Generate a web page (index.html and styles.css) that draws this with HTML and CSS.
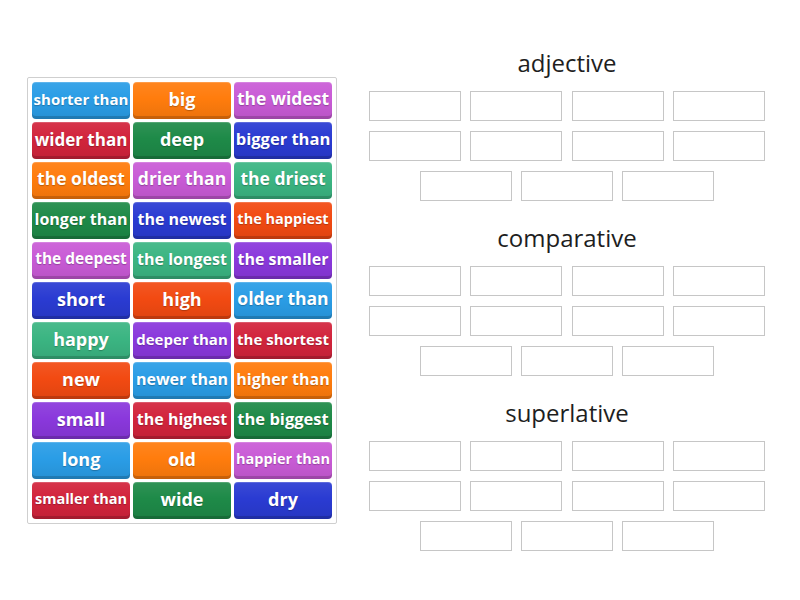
FILE: index.html
```html
<!DOCTYPE html>
<html lang="en">
<head>
<meta charset="utf-8">
<title>Group sort</title>
<link rel="stylesheet" href="styles.css">
</head>
<body>
<main class="page">
  <section class="bank">
    <div class="tile blue fs15">shorter than</div>
    <div class="tile orange fs18">big</div>
    <div class="tile pink fs175">the widest</div>

    <div class="tile red fs17">wider than</div>
    <div class="tile green fs18">deep</div>
    <div class="tile navy fs165">bigger than</div>

    <div class="tile orange fs175">the oldest</div>
    <div class="tile pink fs175">drier than</div>
    <div class="tile teal fs175">the driest</div>

    <div class="tile green fs16">longer than</div>
    <div class="tile navy fs16">the newest</div>
    <div class="tile vermilion fs145">the happiest</div>

    <div class="tile pink fs155">the deepest</div>
    <div class="tile teal fs16">the longest</div>
    <div class="tile purple fs16">the smaller</div>

    <div class="tile navy fs18">short</div>
    <div class="tile vermilion fs18">high</div>
    <div class="tile blue fs175">older than</div>

    <div class="tile teal fs18">happy</div>
    <div class="tile purple fs15">deeper than</div>
    <div class="tile red fs15">the shortest</div>

    <div class="tile vermilion fs18">new</div>
    <div class="tile blue fs16">newer than</div>
    <div class="tile orange fs16">higher than</div>

    <div class="tile purple fs18">small</div>
    <div class="tile red fs16">the highest</div>
    <div class="tile green fs165">the biggest</div>

    <div class="tile blue fs18">long</div>
    <div class="tile orange fs18">old</div>
    <div class="tile pink fs145">happier than</div>

    <div class="tile red fs145">smaller than</div>
    <div class="tile green fs18">wide</div>
    <div class="tile navy fs18">dry</div>
  </section>

  <section class="groups">
    <div class="group">
      <h2 class="group-title">adjective</h2>
      <div class="slots">
        <div class="slot"></div><div class="slot"></div><div class="slot"></div><div class="slot"></div>
        <div class="slot"></div><div class="slot"></div><div class="slot"></div><div class="slot"></div>
        <div class="slot"></div><div class="slot"></div><div class="slot"></div>
      </div>
    </div>
    <div class="group">
      <h2 class="group-title">comparative</h2>
      <div class="slots">
        <div class="slot"></div><div class="slot"></div><div class="slot"></div><div class="slot"></div>
        <div class="slot"></div><div class="slot"></div><div class="slot"></div><div class="slot"></div>
        <div class="slot"></div><div class="slot"></div><div class="slot"></div>
      </div>
    </div>
    <div class="group">
      <h2 class="group-title">superlative</h2>
      <div class="slots">
        <div class="slot"></div><div class="slot"></div><div class="slot"></div><div class="slot"></div>
        <div class="slot"></div><div class="slot"></div><div class="slot"></div><div class="slot"></div>
        <div class="slot"></div><div class="slot"></div><div class="slot"></div>
      </div>
    </div>
  </section>
</main>
</body>
</html>
```

FILE: styles.css
```css
html, body {
  margin: 0;
  padding: 0;
  background: #ffffff;
}

body {
  font-family: "Open Sans", "Liberation Sans", sans-serif;
  width: 800px;
  height: 600px;
  overflow: hidden;
}

.page {
  display: flex;
  align-items: center;
  height: 600px;
  padding-left: 27px;
  gap: 32px;
}

.bank {
  display: grid;
  grid-template-columns: repeat(3, 98px);
  grid-auto-rows: 37px;
  gap: 3px;
  padding: 4px;
  border: 1px solid #cfcfcf;
  border-radius: 2px;
  background: #fff;
}

.tile {
  display: flex;
  align-items: center;
  justify-content: center;
  border-radius: 4px;
  color: #ffffff;
  font-weight: 700;
  white-space: nowrap;
  overflow: hidden;
  line-height: 1;
  padding-bottom: 2px;
  box-sizing: border-box;
  text-shadow: 0 1px 1px rgba(0, 0, 0, 0.25);
  box-shadow: inset 0 -3px 0 rgba(0, 0, 0, 0.16), inset 0 1px 0 rgba(255, 255, 255, 0.18);
  background-image: linear-gradient(to bottom, rgba(255,255,255,0.08) 0%, rgba(255,255,255,0) 45%, rgba(0,0,0,0.08) 100%);
}

.fs18 { font-size: 18px; }
.fs175 { font-size: 17.5px; }
.fs17 { font-size: 17px; }
.fs165 { font-size: 16.5px; }
.fs16 { font-size: 16px; }
.fs155 { font-size: 15.5px; }
.fs15 { font-size: 15px; }
.fs145 { font-size: 14.5px; }

.blue { background-color: #2a9de6; }
.orange { background-color: #ff7c0d; }
.pink { background-color: #c95bd6; }
.red { background-color: #d2243c; }
.green { background-color: #1e8a48; }
.navy { background-color: #2a3bd2; }
.teal { background-color: #3bb582; }
.vermilion { background-color: #f24a12; }
.purple { background-color: #8a38dc; }

.groups {
  display: flex;
  flex-direction: column;
  gap: 19px;
  width: 396px;
  margin-bottom: 5px;
}

.group {
  display: flex;
  flex-direction: column;
  align-items: center;
}

.group-title {
  margin: 0 0 10px 0;
  font-size: 24px;
  line-height: 36px;
  font-weight: 400;
  color: #1e1e1e;
}

.slots {
  display: flex;
  flex-wrap: wrap;
  justify-content: center;
  column-gap: 9.33px;
  row-gap: 10px;
  width: 396px;
}

.slot {
  width: 92px;
  height: 30px;
  box-sizing: border-box;
  border: 1px solid #c6c6c6;
  background: #ffffff;
}
```
